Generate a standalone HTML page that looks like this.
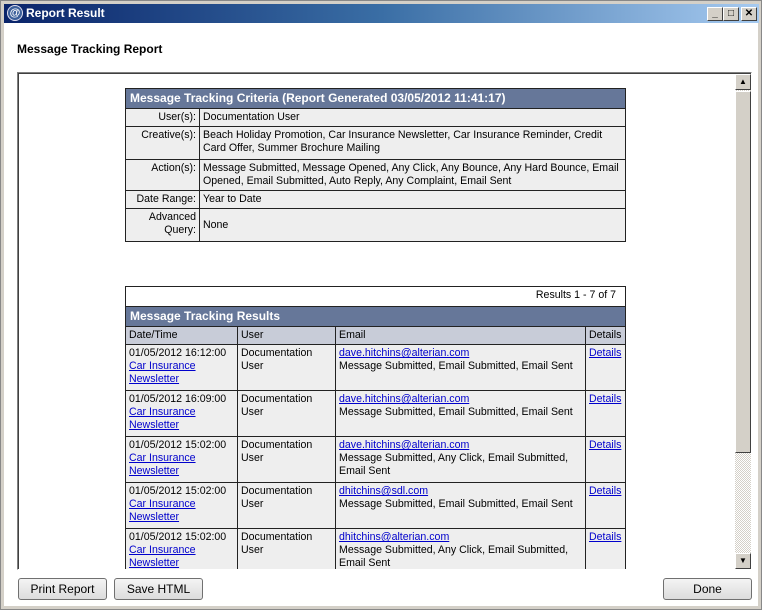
<!DOCTYPE html>
<html><head><style>
*{margin:0;padding:0;box-sizing:border-box}
body{width:762px;height:610px;overflow:hidden;font-family:"Liberation Sans",sans-serif;font-size:10.6px;color:#000;background:#d4d0c8;position:relative}
.win{position:absolute;left:0;top:0;width:762px;height:610px;border:1px solid #888;background:#fff;box-shadow:inset 0 0 0 3px #d4d0c8}
.title{position:absolute;left:3px;top:3px;width:755px;height:19px;background:linear-gradient(90deg,#0a246a,#3a6ea5 50%,#a6caf0)}
.title span{position:absolute;left:22px;top:2px;color:#fff;font-weight:bold;font-size:12px}
.ico{position:absolute;left:3px;top:1px;width:16px;height:16px;border-radius:50%;background:#3b5f9a;border:1px solid #dde;color:#fff;font-size:11px;font-weight:bold;text-align:center;line-height:14px}
.tb{position:absolute;top:3px;width:16px;height:14px;background:#d4d0c8;border:1px solid;border-color:#fff #404040 #404040 #fff;font-size:10px;text-align:center;line-height:11px;font-weight:bold}
.frame{position:absolute;left:16px;top:71px;width:735px;height:498px;border:1px solid;border-color:#808080 #fff #fff #808080;box-shadow:inset 1px 1px 0 #404040;overflow:hidden;background:#fff}
.sb{position:absolute;left:717px;top:1px;width:16px;height:495px;background:repeating-conic-gradient(#d4d0c8 0 25%,#fff 0 50%) 0 0/2px 2px}
.sbb{position:absolute;left:0;width:16px;height:16px;background:#d4d0c8;border:1px solid;border-color:#fff #404040 #404040 #fff;font-size:8px;text-align:center;line-height:14px}
table{border-collapse:collapse;position:absolute;left:107px;width:501px}
td{border:1px solid #222;padding:2px 3px;vertical-align:top;line-height:13px}
.hd{background:#667799;color:#fff;font-weight:bold;font-size:12px;padding:3px 4px}
.lab{text-align:right;width:74px;background:#eee}
.val{background:#eee}
.ch td{background:#c8ccd8}
.r td{background:#eee;height:46px}
a{color:#00c;text-decoration:underline}
.btn{position:absolute;top:577px;height:22px;border:1px solid #707070;border-radius:3px;background:linear-gradient(#f4f4f4,#dcdcdc);text-align:center;line-height:20px;font-size:12px}
</style></head><body>
<div class="win">
<div class="title"><div class="ico">@</div><span>Report Result</span>
<div class="tb" style="left:703px">_</div><div class="tb" style="left:719px">□</div><div class="tb" style="left:737px">✕</div></div>
<div style="position:absolute;left:16px;top:41px;font-weight:bold;font-size:12px">Message Tracking Report</div>
<div class="frame">
<table style="top:15px">
<tr><td colspan="2" class="hd">Message Tracking Criteria (Report Generated 03/05/2012 11:41:17)</td></tr>
<tr><td class="lab">User(s):</td><td class="val">Documentation User</td></tr>
<tr><td class="lab">Creative(s):</td><td class="val" style="height:33px">Beach Holiday Promotion, Car Insurance Newsletter, Car Insurance Reminder, Credit Card Offer, Summer Brochure Mailing</td></tr>
<tr><td class="lab">Action(s):</td><td class="val">Message Submitted, Message Opened, Any Click, Any Bounce, Any Hard Bounce, Email Opened, Email Submitted, Auto Reply, Any Complaint, Email Sent</td></tr>
<tr><td class="lab">Date Range:</td><td class="val">Year to Date</td></tr>
<tr><td class="lab" style="height:33px">Advanced Query:</td><td class="val" style="vertical-align:middle">None</td></tr>
</table>
<table style="top:213px">
<tr><td colspan="4" style="text-align:right;height:20px;padding-right:9px">Results 1 - 7 of 7</td></tr>
<tr><td colspan="4" class="hd">Message Tracking Results</td></tr>
<tr class="ch"><td style="width:112px">Date/Time</td><td style="width:98px">User</td><td>Email</td><td style="width:40px">Details</td></tr>
<tr class="r"><td>01/05/2012 16:12:00<br><a>Car Insurance Newsletter</a></td><td>Documentation User</td><td><a>dave.hitchins@alterian.com</a><br>Message Submitted, Email Submitted, Email Sent</td><td><a>Details</a></td></tr>
<tr class="r"><td>01/05/2012 16:09:00<br><a>Car Insurance Newsletter</a></td><td>Documentation User</td><td><a>dave.hitchins@alterian.com</a><br>Message Submitted, Email Submitted, Email Sent</td><td><a>Details</a></td></tr>
<tr class="r"><td>01/05/2012 15:02:00<br><a>Car Insurance Newsletter</a></td><td>Documentation User</td><td><a>dave.hitchins@alterian.com</a><br>Message Submitted, Any Click, Email Submitted, Email Sent</td><td><a>Details</a></td></tr>
<tr class="r"><td>01/05/2012 15:02:00<br><a>Car Insurance Newsletter</a></td><td>Documentation User</td><td><a>dhitchins@sdl.com</a><br>Message Submitted, Email Submitted, Email Sent</td><td><a>Details</a></td></tr>
<tr class="r"><td>01/05/2012 15:02:00<br><a>Car Insurance Newsletter</a></td><td>Documentation User</td><td><a>dhitchins@alterian.com</a><br>Message Submitted, Any Click, Email Submitted, Email Sent</td><td><a>Details</a></td></tr>
</table>
<div class="sb"><div class="sbb" style="top:0">▲</div><div class="sbb" style="top:17px;height:362px"></div><div class="sbb" style="top:479px">▼</div></div>
</div>
<div class="btn" style="left:17px;width:89px">Print Report</div>
<div class="btn" style="left:113px;width:89px">Save HTML</div>
<div class="btn" style="left:662px;width:89px">Done</div>
</div>
</body></html>
